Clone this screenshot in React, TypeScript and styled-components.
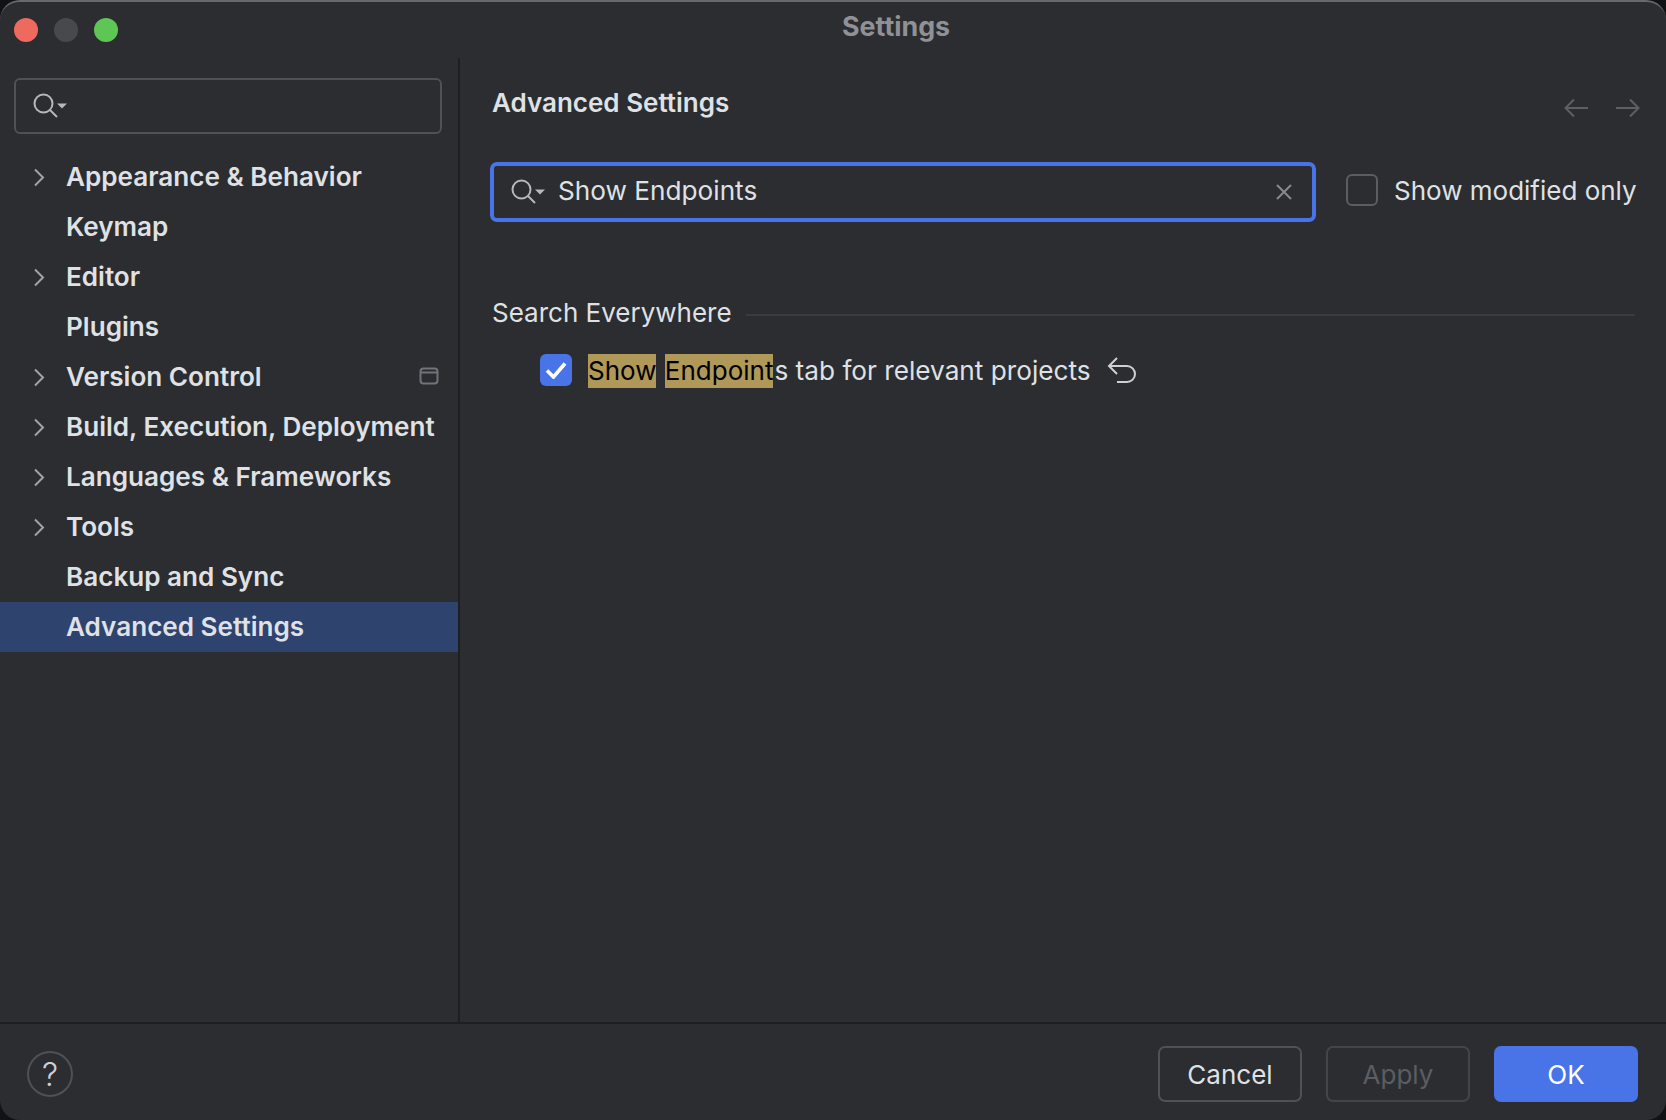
import styled, { createGlobalStyle } from 'styled-components'

const GlobalStyle = createGlobalStyle`
  html, body {
    margin: 0;
    padding: 0;
    background: #121214;
  }
  * {
    box-sizing: border-box;
  }
  body {
    font-family: Inter, "Liberation Sans", sans-serif;
  }
`

const Window = styled.div`
  width: 1666px;
  height: 1120px;
  display: flex;
  flex-direction: column;
  overflow: hidden;
  background: #2b2d30;
  border-radius: 20px;
  border-top: 2px solid #69696c;
  color: #dfe1e5;
`

const TitleBar = styled.div`
  height: 56px;
  flex: none;
  display: flex;
  align-items: center;
  padding-left: 14px;
  gap: 16px;
`

const Light = styled.span<{ $color: string }>`
  width: 24px;
  height: 24px;
  border-radius: 50%;
  background: ${p => p.$color};
`

const WindowTitle = styled.div`
  margin-left: 708px;
  margin-bottom: 8px;
  font-size: 26.8px;
  font-weight: 700;
  color: #8f9196;
`

const Body = styled.div`
  flex: 1;
  min-height: 0;
  display: flex;
`

const Sidebar = styled.aside`
  width: 460px;
  flex: none;
  padding-top: 20px;
  border-right: 2px solid #1e1f22;
`

const SideSearch = styled.div`
  height: 56px;
  margin: 0 16px 18px 14px;
  display: flex;
  align-items: center;
  padding-left: 17px;
  border: 2px solid #4e5157;
  border-radius: 6px;
`

const NavRow = styled.div<{ $selected?: boolean }>`
  height: 50px;
  display: flex;
  align-items: center;
  padding-left: 34px;
  padding-right: 19px;
  background: ${p => (p.$selected ? '#2e436e' : 'transparent')};
`

const ChevronSlot = styled.span`
  width: 32px;
  flex: none;
  display: flex;
  align-items: center;
`

const NavLabel = styled.span`
  flex: 1;
  padding-bottom: 2px;
  font-size: 26.1px;
  font-weight: 600;
  white-space: nowrap;
`

const BadgeSlot = styled.span`
  display: flex;
  margin-bottom: 2px;
`

const Main = styled.main`
  flex: 1;
  min-width: 0;
  padding: 0 31px 0 30px;
`

const PageHeader = styled.div`
  height: 90px;
  display: flex;
  align-items: center;
  justify-content: space-between;
  padding-left: 2px;
`

const PageTitle = styled.h1`
  margin: 0 0 2px;
  font-size: 26px;
  font-weight: 600;
`

const HistoryArrows = styled.div`
  display: flex;
  gap: 28px;
  margin-top: 10px;
  margin-right: -5px;
`

const FilterRow = styled.div`
  margin-top: 14px;
  display: flex;
  align-items: center;
`

const FilterField = styled.div`
  width: 826px;
  height: 60px;
  flex: none;
  display: flex;
  align-items: center;
  padding: 0 20px 0 17px;
  border: 4px solid #4874e8;
  border-radius: 7px;
`

const FilterText = styled.span`
  flex: 1;
  margin-left: 13px;
  padding-bottom: 4px;
  font-size: 26.2px;
`

const CheckBox = styled.span<{ $checked?: boolean }>`
  width: 32px;
  height: 32px;
  flex: none;
  display: flex;
  align-items: center;
  justify-content: center;
  border-radius: 6px;
  background: ${p => (p.$checked ? '#4874e8' : 'transparent')};
  border: ${p => (p.$checked ? 'none' : '2px solid #5a5d63')};
`

const OptionCheckBox = styled(CheckBox)`
  margin-bottom: 2px;
`

const ModifiedOnly = styled.label`
  margin-left: 30px;
  padding-bottom: 4px;
  display: flex;
  align-items: center;
  gap: 16px;
  font-size: 26px;
  white-space: nowrap;
`

const SectionHeading = styled.div`
  margin-top: 71px;
  height: 40px;
  display: flex;
  align-items: center;
  gap: 14px;
  padding: 0 0 2px 2px;
  font-size: 26px;
  white-space: nowrap;
`

const SectionLine = styled.span`
  flex: 1;
  height: 2px;
  margin-top: 6px;
  background: #393b40;
`

const OptionRow = styled.div`
  margin-top: 21px;
  padding-left: 50px;
  display: flex;
  align-items: center;
  gap: 16px;
  height: 34px;
  font-size: 26.2px;
  white-space: nowrap;
`

const OptionText = styled.span`
  line-height: 34px;
`

const Match = styled.mark`
  display: inline-block;
  margin-right: 1px;
  background: #b09858;
  color: #000;
  height: 34px;
  font-size: 26px;
  line-height: 34px;
`

const Footer = styled.footer`
  height: 98px;
  flex: none;
  display: flex;
  align-items: center;
  padding: 4px 28px 0 27px;
  border-top: 2px solid #1e1f22;
`

const HelpButton = styled.span`
  width: 46px;
  height: 46px;
  display: flex;
  align-items: center;
  justify-content: center;
  border: 2px solid #4e5157;
  border-radius: 50%;
  font-size: 32px;
  font-weight: 300;
  color: #ced0d6;
`

const Buttons = styled.div`
  margin-left: auto;
  display: flex;
  gap: 24px;
`

const Button = styled.button<{ $primary?: boolean }>`
  width: 144px;
  height: 56px;
  padding: 0;
  border-radius: 7px;
  font-family: inherit;
  font-size: 26px;
  color: ${p => (p.$primary ? '#fff' : '#dfe1e5')};
  background: ${p => (p.$primary ? '#4874e8' : 'transparent')};
  border: ${p => (p.$primary ? 'none' : '2px solid #4e5157')};

  &:disabled {
    color: #5a5d63;
    border-color: #43454a;
  }
`

const SearchIcon = () => (
  <svg width="34" height="26" viewBox="0 0 34 26" fill="none">
    <circle cx="10.5" cy="10.5" r="9" stroke="#b4b8bf" strokeWidth="2" />
    <path d="M17 17l7 7" stroke="#b4b8bf" strokeWidth="2" />
    <path d="M24 10.5h10l-5 5z" fill="#b4b8bf" />
  </svg>
)

const Chevron = () => (
  <svg width="11" height="19" viewBox="0 0 11 19" fill="none">
    <path d="M1 1.5l8 8-8 8" stroke="#a0a3aa" strokeWidth="2" />
  </svg>
)

const ProjectBadge = () => (
  <svg width="20" height="18" viewBox="0 0 20 18" fill="none">
    <rect x="1.5" y="1.5" width="17" height="15" rx="3" stroke="#6f737a" strokeWidth="2" />
    <path d="M2 5.5h16" stroke="#6f737a" strokeWidth="2" />
  </svg>
)

const ArrowLeft = () => (
  <svg width="24" height="20" viewBox="0 0 24 20" fill="none">
    <path d="M24 10H2M10 1.5L1.5 10l8.5 8.5" stroke="#5c5f65" strokeWidth="2" />
  </svg>
)

const ArrowRight = () => (
  <svg width="24" height="20" viewBox="0 0 24 20" fill="none">
    <path d="M0 10h22M14 1.5l8.5 8.5-8.5 8.5" stroke="#5c5f65" strokeWidth="2" />
  </svg>
)

const ClearIcon = () => (
  <svg width="16" height="16" viewBox="0 0 16 16" fill="none">
    <path d="M1 1l14 14M15 1L1 15" stroke="#868a91" strokeWidth="2" />
  </svg>
)

const CheckMark = () => (
  <svg width="22" height="18" viewBox="0 0 22 18" fill="none">
    <path d="M2 9.5l6.5 6.5L20 2.5" stroke="#fff" strokeWidth="3.6" />
  </svg>
)

const RevertIcon = () => (
  <svg width="32" height="28" viewBox="0 0 32 28" fill="none">
    <path d="M10 1L2 9l8 8M2 9h18a8 8 0 0 1 0 16H10" stroke="#ced0d6" strokeWidth="2" />
  </svg>
)

const navItems = [
  { label: 'Appearance & Behavior', expandable: true },
  { label: 'Keymap' },
  { label: 'Editor', expandable: true },
  { label: 'Plugins' },
  { label: 'Version Control', expandable: true, badge: true },
  { label: 'Build, Execution, Deployment', expandable: true },
  { label: 'Languages & Frameworks', expandable: true },
  { label: 'Tools', expandable: true },
  { label: 'Backup and Sync' },
  { label: 'Advanced Settings', selected: true },
]

function App() {
  return (
    <>
      <GlobalStyle />
      <Window>
        <TitleBar>
          <Light $color="#ee6a5f" />
          <Light $color="#48494c" />
          <Light $color="#5ec654" />
          <WindowTitle>Settings</WindowTitle>
        </TitleBar>
        <Body>
          <Sidebar>
            <SideSearch>
              <SearchIcon />
            </SideSearch>
            {navItems.map(item => (
              <NavRow key={item.label} $selected={item.selected}>
                <ChevronSlot>{item.expandable && <Chevron />}</ChevronSlot>
                <NavLabel>{item.label}</NavLabel>
                {item.badge && (
                  <BadgeSlot>
                    <ProjectBadge />
                  </BadgeSlot>
                )}
              </NavRow>
            ))}
          </Sidebar>
          <Main>
            <PageHeader>
              <PageTitle>Advanced Settings</PageTitle>
              <HistoryArrows>
                <ArrowLeft />
                <ArrowRight />
              </HistoryArrows>
            </PageHeader>
            <FilterRow>
              <FilterField>
                <SearchIcon />
                <FilterText>Show Endpoints</FilterText>
                <ClearIcon />
              </FilterField>
              <ModifiedOnly>
                <CheckBox />
                Show modified only
              </ModifiedOnly>
            </FilterRow>
            <SectionHeading>
              Search Everywhere
              <SectionLine />
            </SectionHeading>
            <OptionRow>
              <OptionCheckBox $checked>
                <CheckMark />
              </OptionCheckBox>
              <OptionText>
                <Match>Show</Match> <Match>Endpoint</Match>s tab for relevant projects
              </OptionText>
              <RevertIcon />
            </OptionRow>
          </Main>
        </Body>
        <Footer>
          <HelpButton>?</HelpButton>
          <Buttons>
            <Button>Cancel</Button>
            <Button disabled>Apply</Button>
            <Button $primary>OK</Button>
          </Buttons>
        </Footer>
      </Window>
    </>
  )
}

export default App
